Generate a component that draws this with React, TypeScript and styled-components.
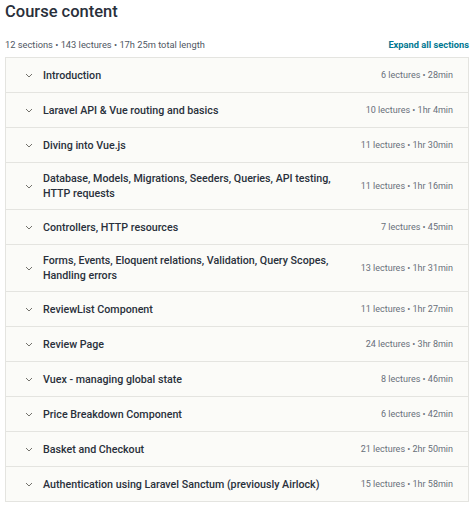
import { createGlobalStyle } from "styled-components";
import styled from "styled-components";

type Section = {
  title: string;
  lectures: number;
  length: string;
};

const sections: Section[] = [
  { title: "Introduction", lectures: 6, length: "28min" },
  { title: "Laravel API & Vue routing and basics", lectures: 10, length: "1hr 4min" },
  { title: "Diving into Vue.js", lectures: 11, length: "1hr 30min" },
  {
    title: "Database, Models, Migrations, Seeders, Queries, API testing, HTTP requests",
    lectures: 11,
    length: "1hr 16min",
  },
  { title: "Controllers, HTTP resources", lectures: 7, length: "45min" },
  {
    title: "Forms, Events, Eloquent relations, Validation, Query Scopes, Handling errors",
    lectures: 13,
    length: "1hr 31min",
  },
  { title: "ReviewList Component", lectures: 11, length: "1hr 27min" },
  { title: "Review Page", lectures: 24, length: "3hr 8min" },
  { title: "Vuex - managing global state", lectures: 8, length: "46min" },
  { title: "Price Breakdown Component", lectures: 6, length: "42min" },
  { title: "Basket and Checkout", lectures: 21, length: "2hr 50min" },
  { title: "Authentication using Laravel Sanctum (previously Airlock)", lectures: 15, length: "1hr 58min" },
];

const Chevron = () => (
  <svg width="8" height="5" viewBox="0 0 8 5" fill="none">
    <path d="M1 1l3 3 3-3" stroke="#73726c" strokeWidth="1" />
  </svg>
);

const App = () => {
  return (
    <>
      <GlobalStyle />
      <Page>
        <Title>Course content</Title>
        <Summary>
          <span>12 sections • 143 lectures • 17h 25m total length</span>
          <ExpandLink>Expand all sections</ExpandLink>
        </Summary>
        <Panel>
          {sections.map(s => (
            <Row key={s.title}>
              <ChevronBox>
                <Chevron />
              </ChevronBox>
              <SectionTitle>{s.title}</SectionTitle>
              <Meta>
                {s.lectures} lectures • {s.length}
              </Meta>
            </Row>
          ))}
        </Panel>
      </Page>
    </>
  );
};

const GlobalStyle = createGlobalStyle`
  body {
    margin: 0;
    background: #ffffff;
    font-family: Roboto, "Liberation Sans", sans-serif;
    color: #29303b;
  }
`;

const Page = styled.div`
  width: 464px;
  padding: 0 5px;
`;

const Title = styled.h2`
  margin: 0;
  padding-top: 1px;
  font-size: 16.5px;
  line-height: 22px;
  font-weight: 500;
  color: #29303b;
`;

const Summary = styled.div`
  display: flex;
  justify-content: space-between;
  align-items: center;
  height: 20px;
  margin-top: 11px;
  margin-bottom: 3px;
  font-size: 9.3px;
  color: #505763;
`;

const ExpandLink = styled.a`
  font-weight: 700;
  color: #007791;
  font-size: 9.3px;
  cursor: pointer;
`;

const Panel = styled.div`
  border: 1px solid #e4e4e0;
`;

const Row = styled.div`
  display: flex;
  align-items: center;
  min-height: 35px;
  padding: 8px 15px 8px 19px;
  box-sizing: border-box;
  background: #fbfbf8;
  border-top: 1px solid #e4e4e0;
  &:first-child {
    border-top: none;
    min-height: 34px;
  }
`;

const ChevronBox = styled.div`
  display: flex;
  width: 18px;
  flex-shrink: 0;
`;

const SectionTitle = styled.div`
  flex: 1;
  font-size: 10.7px;
  line-height: 15px;
  font-weight: 500;
  color: #29303b;
  padding-right: 24px;
`;

const Meta = styled.div`
  flex-shrink: 0;
  font-size: 9px;
  color: #686f7a;
`;

export default App;
